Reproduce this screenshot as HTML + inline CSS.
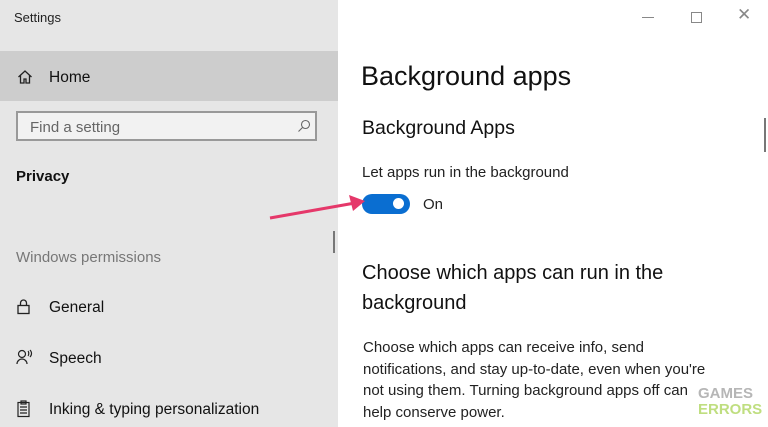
<html><head><style>
body{margin:0;width:768px;height:427px;overflow:hidden;font-family:"Liberation Sans",sans-serif;position:relative;background:#fff}
.l{position:absolute;left:0;top:0;width:338px;height:427px;background:#e6e6e6}
.t{position:absolute;white-space:nowrap}
</style></head><body>
<div class="l"></div>
<div class="t" style="left:14px;top:10px;font-size:13px;color:#222">Settings</div>
<div style="position:absolute;left:0;top:51px;width:338px;height:50px;background:#cdcdcd"></div>
<svg style="position:absolute;left:17px;top:69px" width="16" height="16" viewBox="0 0 16 16" fill="none" stroke="#222" stroke-width="1.3"><path d="M1.5 8L8 2l6.5 6M3.5 6.5V14h3.5v-4h2v4h3.5V6.5"/></svg>
<div class="t" style="left:49px;top:69px;font-size:15.5px;color:#111">Home</div>
<div style="position:absolute;left:16px;top:111px;width:301px;height:30px;border:2px solid #999;box-sizing:border-box;background:#f2f2f2"></div>
<div class="t" style="left:30px;top:119px;font-size:15px;color:#666">Find a setting</div>
<svg style="position:absolute;left:297px;top:119px" width="14" height="14" viewBox="0 0 14 14" fill="none" stroke="#666" stroke-width="1.1"><circle cx="8.5" cy="5.5" r="4"/><path d="M5.5 8.5L1.5 12.5"/></svg>
<div class="t" style="left:16px;top:168px;font-size:15px;font-weight:bold;color:#111">Privacy</div>
<div class="t" style="left:16px;top:249px;font-size:15px;color:#777">Windows permissions</div>
<div style="position:absolute;left:333px;top:231px;width:2px;height:22px;background:#777"></div>
<svg style="position:absolute;left:16px;top:298px" width="16" height="17" viewBox="0 0 16 17" fill="none" stroke="#222" stroke-width="1.3"><rect x="2" y="7.5" width="11" height="8"/><path d="M4.5 7.5V5a3 3 0 0 1 6 0v2.5"/></svg>
<div class="t" style="left:49px;top:299px;font-size:15.5px;color:#111">General</div>
<svg style="position:absolute;left:16px;top:349px" width="18" height="16" viewBox="0 0 18 16" fill="none" stroke="#222" stroke-width="1.2"><circle cx="6" cy="5" r="3.5"/><path d="M1 15c0-3 2.5-5 5-5s5 2 5 5M12 2c1 1 1 4 0 5M14 1c2 2 2 5 0 7"/></svg>
<div class="t" style="left:49px;top:350px;font-size:15.5px;color:#111">Speech</div>
<svg style="position:absolute;left:16px;top:400px" width="16" height="18" viewBox="0 0 16 18" fill="none" stroke="#222" stroke-width="1.2"><rect x="2" y="2.5" width="11" height="14"/><rect x="5" y="1" width="5" height="3"/><path d="M4 7h7M4 10h7M4 13h7"/></svg>
<div class="t" style="left:49px;top:401px;font-size:15.5px;color:#111">Inking &amp; typing personalization</div>
<div style="position:absolute;left:642px;top:17px;width:12px;height:1px;background:#888"></div>
<div style="position:absolute;left:691px;top:12px;width:9px;height:9px;border:1px solid #888"></div>
<div class="t" style="left:737px;top:5px;font-size:17px;color:#888">✕</div>
<div class="t" style="left:361px;top:61px;font-size:27px;color:#111">Background apps</div>
<div class="t" style="left:362px;top:117px;font-size:19.5px;color:#111">Background Apps</div>
<div style="position:absolute;left:764px;top:118px;width:2px;height:34px;background:#777"></div>
<div class="t" style="left:362px;top:164px;font-size:15px;color:#222">Let apps run in the background</div>
<div style="position:absolute;left:362px;top:194px;width:48px;height:20px;border-radius:10px;background:#0a6ed1"></div>
<div style="position:absolute;left:393px;top:198px;width:11px;height:11px;border-radius:50%;background:#fff"></div>
<div class="t" style="left:423px;top:196px;font-size:15px;color:#222">On</div>
<svg style="position:absolute;left:265px;top:190px" width="110" height="35"><path d="M5 28L90 13" stroke="#e5386a" stroke-width="3"/><path d="M100 11L84 5l4 16z" fill="#e5386a"/></svg>
<div class="t" style="left:362px;top:258px;font-size:20px;color:#111;line-height:30px">Choose which apps can run in the<br>background</div>
<div class="t" style="left:363px;top:337px;font-size:15px;color:#222;line-height:21.5px">Choose which apps can receive info, send<br>notifications, and stay up-to-date, even when you're<br>not using them. Turning background apps off can<br>help conserve power.</div>
<div class="t" style="left:698px;top:386px;font-size:15px;font-weight:bold;color:#aaa;line-height:16px;opacity:.85">GAMES<br><span style="color:#b5d96a">ERRORS</span></div>
</body></html>
